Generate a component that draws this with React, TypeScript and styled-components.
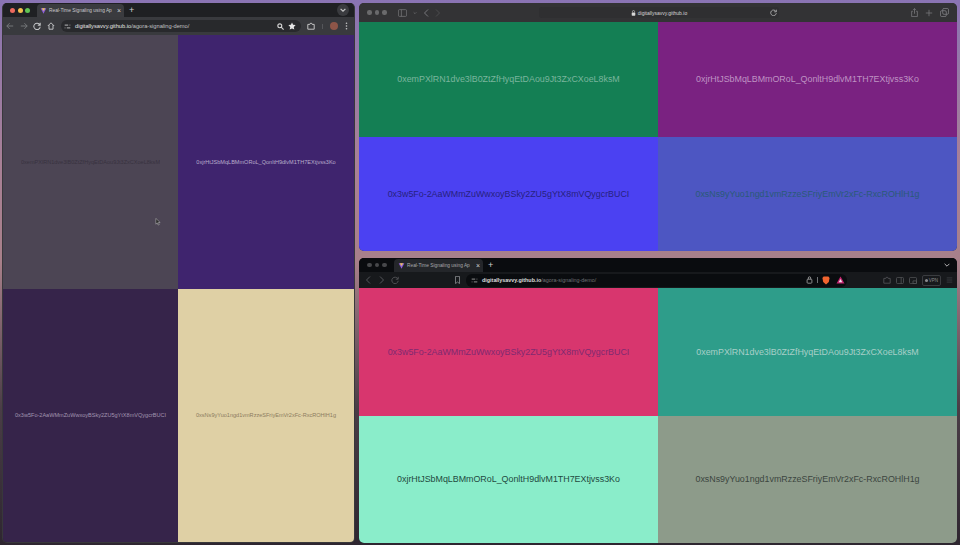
import React from 'react'
import styled, { createGlobalStyle } from 'styled-components'

const ADDR_A = '0xemPXlRN1dve3lB0ZtZfHyqEtDAou9Jt3ZxCXoeL8ksM'
const ADDR_B = '0xjrHtJSbMqLBMmORoL_QonltH9dlvM1TH7EXtjvss3Ko'
const ADDR_C = '0x3w5Fo-2AaWMmZuWwxoyBSky2ZU5gYtX8mVQygcrBUCI'
const ADDR_D = '0xsNs9yYuo1ngd1vmRzzeSFriyEmVr2xFc-RxcROHlH1g'

const Favicon = () => (
  <FaviconMark width="7" height="8" viewBox="0 0 10 10">
    <path d="M1 1h8L5 9z" fill="#8d5fd8" />
    <path d="M2.500 1h5L5 5z" fill="#eec25a" />
  </FaviconMark>
)

const ChromeBar = () => (
  <>
    <TabStrip>
      <Lights>
        <Light color="#ed6a5e" />
        <Light color="#f4bf4f" />
        <Light color="#61c554" />
      </Lights>
      <Tab>
        <Favicon />
        <TabTitle>Real-Time Signaling using Ap</TabTitle>
        <TabClose>×</TabClose>
      </Tab>
      <NewTab>+</NewTab>
      <Spacer />
      <RoundBtn>
        <svg width="6" height="6" viewBox="0 0 10 10" fill="none" stroke="#c8c8c8" strokeWidth="2">
          <path d="M1 3l4 4 4-4" />
        </svg>
      </RoundBtn>
    </TabStrip>
    <ChromeTools>
      <svg width="8" height="8" viewBox="0 0 10 10" fill="none" stroke="#77797c" strokeWidth="1.200">
        <path d="M9 5H1M4.500 1.500L1 5l3.500 3.500" />
      </svg>
      <svg width="8" height="8" viewBox="0 0 10 10" fill="none" stroke="#77797c" strokeWidth="1.200">
        <path d="M1 5h8M5.500 1.500L9 5 5.500 8.500" />
      </svg>
      <svg width="8" height="8" viewBox="0 0 10 10" fill="none" stroke="#c4c6c8" strokeWidth="1.300">
        <path d="M8.500 3.500A4 4 0 1 0 9 6M9 1v3H6" />
      </svg>
      <svg width="8" height="8" viewBox="0 0 10 10" fill="none" stroke="#c4c6c8" strokeWidth="1.200">
        <path d="M1 5l4-4 4 4M2.500 4v5h5V4" />
      </svg>
      <ChromeAddress>
        <svg width="7" height="7" viewBox="0 0 10 10" fill="none" stroke="#d4d4d4" strokeWidth="1.200">
          <path d="M1 3h5M8 3h1M1 7h1M4 7h5" />
        </svg>
        <AddressText>
          digitallysavvy.github.io<Dim>/agora-signaling-demo/</Dim>
        </AddressText>
        <Spacer />
        <svg width="7" height="7" viewBox="0 0 10 10" fill="none" stroke="#d4d4d4" strokeWidth="1.600">
          <circle cx="4" cy="4" r="2.800" />
          <path d="M6 6l3.400 3.400" />
        </svg>
        <svg width="8" height="8" viewBox="0 0 10 10" fill="#e4e4e4">
          <path d="M5 .5l1.400 3 3.200.4-2.400 2.200.7 3.200L5 8.200 2.100 9.300l.7-3.200L.4 3.900l3.200-.4z" />
        </svg>
      </ChromeAddress>
      <ChromeActions>
        <svg width="8" height="8" viewBox="0 0 10 10" fill="none" stroke="#c8c8c8" strokeWidth="1.200">
          <path d="M1 3h2.500a1.500 1.500 0 0 1 3 0H9v6H1z" />
        </svg>
        <ToolSeparator />
        <Avatar />
        <svg width="3" height="8" viewBox="0 0 3 10" fill="#c8c8c8">
          <circle cx="1.500" cy="1.500" r="1" />
          <circle cx="1.500" cy="5" r="1" />
          <circle cx="1.500" cy="8.500" r="1" />
        </svg>
      </ChromeActions>
    </ChromeTools>
  </>
)

const SafariBar = () => (
  <SafariTools>
    <Lights>
      <SafariLight color="#6a6a6c" />
      <SafariLight color="#6a6a6c" />
      <SafariLight color="#6a6a6c" />
    </Lights>
    <SafariNav>
      <svg width="9" height="8" viewBox="0 0 12 10" fill="none" stroke="#77777a" strokeWidth="1">
        <rect x=".5" y=".5" width="11" height="9" rx="1.500" />
        <path d="M4.500 .5v9" />
      </svg>
      <svg width="4" height="4" viewBox="0 0 6 6" fill="none" stroke="#77777a" strokeWidth="1">
        <path d="M1 2l2 2 2-2" />
      </svg>
      <svg width="6" height="8" viewBox="0 0 6 8" fill="none" stroke="#77777a" strokeWidth="1">
        <path d="M5 .5L1.500 4 5 7.500" />
      </svg>
      <svg width="6" height="8" viewBox="0 0 6 8" fill="none" stroke="#4c4c4e" strokeWidth="1">
        <path d="M1 .5L4.500 4 1 7.500" />
      </svg>
    </SafariNav>
    <SafariAddress>
      <svg width="5" height="6" viewBox="0 0 8 10" fill="#d8d8d8">
        <rect x="1" y="4" width="6" height="5.500" rx="1" />
        <path d="M2.200 4V2.600a1.800 1.800 0 0 1 3.600 0V4" fill="none" stroke="#d8d8d8" />
      </svg>
      <SafariHost>digitallysavvy.github.io</SafariHost>
      <SafariReload>
        <svg width="7" height="7" viewBox="0 0 10 10" fill="none" stroke="#b4b4b4" strokeWidth="1.200">
          <path d="M8.500 3.500A4 4 0 1 0 9 6M9 1v3H6" />
        </svg>
      </SafariReload>
    </SafariAddress>
    <SafariActions>
      <svg width="7" height="9" viewBox="0 0 8 11" fill="none" stroke="#77777a" strokeWidth="1">
        <path d="M2 4H.5v6.500h7V4H6M4 7V.8M2.400 2.200L4 .7l1.600 1.500" />
      </svg>
      <svg width="8" height="8" viewBox="0 0 10 10" fill="none" stroke="#77777a" strokeWidth="1">
        <path d="M5 1v8M1 5h8" />
      </svg>
      <svg width="9" height="9" viewBox="0 0 10 10" fill="none" stroke="#77777a" strokeWidth="1">
        <rect x="3" y=".5" width="6.500" height="6.500" rx="1.500" />
        <rect x=".5" y="3" width="6.500" height="6.500" rx="1.500" />
      </svg>
    </SafariActions>
  </SafariTools>
)

const BraveBar = () => (
  <>
    <BraveStrip>
      <Lights>
        <SafariLight color="#47484b" />
        <SafariLight color="#47484b" />
        <SafariLight color="#47484b" />
      </Lights>
      <BraveTab>
        <Favicon />
        <BraveTabTitle>Real-Time Signaling using Ap</BraveTabTitle>
        <TabClose>×</TabClose>
      </BraveTab>
      <NewTab>+</NewTab>
      <Spacer />
      <svg width="6" height="6" viewBox="0 0 10 10" fill="none" stroke="#b8b8b8" strokeWidth="1.600">
        <path d="M1 3l4 4 4-4" />
      </svg>
    </BraveStrip>
    <BraveTools>
      <BraveNav>
        <svg width="7" height="8" viewBox="0 0 7 8" fill="none" stroke="#55575a" strokeWidth="1">
          <path d="M5 .5L1.500 4 5 7.500" />
        </svg>
        <svg width="7" height="8" viewBox="0 0 7 8" fill="none" stroke="#55575a" strokeWidth="1">
          <path d="M2 .5L5.500 4 2 7.500" />
        </svg>
        <svg width="8" height="8" viewBox="0 0 10 10" fill="none" stroke="#55575a" strokeWidth="1.100">
          <path d="M8.500 3.500A4 4 0 1 0 9 6M9 1v3H6" />
        </svg>
      </BraveNav>
      <BookmarkSlot>
        <svg width="7" height="8" viewBox="0 0 8 10" fill="none" stroke="#8a8c8f" strokeWidth="1">
          <path d="M1.500 .5h5v9l-2.500-2-2.500 2z" />
        </svg>
      </BookmarkSlot>
      <BraveAddress>
        <svg width="7" height="7" viewBox="0 0 10 10" fill="none" stroke="#a8a8a8" strokeWidth="1.200">
          <path d="M1 3h5M8 3h1M1 7h1M4 7h5" />
        </svg>
        <BraveAddressText>
          digitallysavvy.github.io<BraveDim>/agora-signaling-demo/</BraveDim>
        </BraveAddressText>
        <Spacer />
        <svg width="7" height="8" viewBox="0 0 8 10" fill="none" stroke="#a8a8a8" strokeWidth="1">
          <rect x="1" y="4" width="6" height="5" rx="1" />
          <path d="M2.500 4V2.500a1.500 1.500 0 0 1 3 0V4" />
        </svg>
        <AddressDivider />
        <svg width="8" height="9" viewBox="0 0 10 11" fill="#f0642f">
          <path d="M2 .5h6l1.500 2-1 5L5 10.500 1.500 7.500l-1-5z" />
        </svg>
        <BraveRewards>
          <svg width="9" height="8" viewBox="0 0 10 9">
            <path d="M5 .5l4.500 8h-9z" fill="#c3246e" />
            <path d="M5 3.500l2 3.500H3z" fill="#efe4f0" />
          </svg>
        </BraveRewards>
      </BraveAddress>
      <BraveActions>
        <svg width="8" height="8" viewBox="0 0 10 10" fill="none" stroke="#55575a" strokeWidth="1">
          <path d="M1 3h2.500a1.500 1.500 0 0 1 3 0H9v6H1z" />
        </svg>
        <svg width="8" height="7" viewBox="0 0 10 9" fill="none" stroke="#55575a" strokeWidth="1">
          <rect x=".5" y=".5" width="9" height="8" rx="1.500" />
          <path d="M6.500 .5v8" />
        </svg>
        <svg width="8" height="7" viewBox="0 0 10 9" fill="none" stroke="#55575a" strokeWidth="1">
          <rect x=".5" y=".5" width="9" height="8" rx="1.500" />
          <path d="M5 5h4.500v3.500H5z" />
        </svg>
        <VpnBadge>
          <VpnDot />
          VPN
        </VpnBadge>
        <svg width="7" height="6" viewBox="0 0 10 8" fill="none" stroke="#44464a" strokeWidth="1">
          <path d="M1 1h8M1 4h8M1 7h8" />
        </svg>
      </BraveActions>
    </BraveTools>
  </>
)

const App = () => (
  <>
    <GlobalStyle />
    <Desktop>
      <LeftWindow>
        <ChromeBar />
        <LeftGrid>
          <Cell bg="#4c4554" color="#38323f" size={5.55}>
            <Truncated>{ADDR_A}</Truncated>
          </Cell>
          <Cell bg="#3f246e" color="#b8accb" size={5.55}>{ADDR_B}</Cell>
          <Cell bg="#36244a" color="#a194b0" size={5.55}>{ADDR_C}</Cell>
          <Cell bg="#dfd0a5" color="#8c7c5f" size={5.55}>{ADDR_D}</Cell>
        </LeftGrid>
        <Cursor>
          <svg width="6" height="8" viewBox="0 0 8 11">
            <path d="M1 .5v8l2-1.800 1.300 3 1.400-.6-1.300-2.900h2.600z" fill="#2a2a2a" stroke="#d8d8d8" strokeWidth=".6" />
          </svg>
        </Cursor>
      </LeftWindow>
      <RightColumn>
        <TopWindow>
          <SafariBar />
          <UserGrid>
            <Cell bg="#147f54" color="#7ab59d" size={8.9}>{ADDR_A}</Cell>
            <Cell bg="#7a2281" color="#bf93c3" size={8.9}>{ADDR_B}</Cell>
            <Cell bg="#4b41f2" color="#27217f" size={8.9}>{ADDR_C}</Cell>
            <Cell bg="#4d56c2" color="#2a5a78" size={8.9}>{ADDR_D}</Cell>
          </UserGrid>
        </TopWindow>
        <BottomWindow>
          <BraveBar />
          <UserGrid>
            <Cell bg="#d8366e" color="#7f2a70" size={8.9}>{ADDR_C}</Cell>
            <Cell bg="#2e9d8a" color="#a8cfc8" size={8.9}>{ADDR_A}</Cell>
            <Cell bg="#8aedca" color="#1f4a40" size={8.9}>{ADDR_B}</Cell>
            <Cell bg="#8d9b8a" color="#3c4640" size={8.9}>{ADDR_D}</Cell>
          </UserGrid>
        </BottomWindow>
      </RightColumn>
    </Desktop>
  </>
)

export default App

const GlobalStyle = createGlobalStyle`
  html, body {
    margin: 0;
    padding: 0;
    width: 960px;
    height: 545px;
    overflow: hidden;
  }
  body {
    font-family: 'Liberation Sans', Arial, sans-serif;
  }
`
const Desktop = styled.div`
  width: 960px;
  height: 545px;
  box-sizing: border-box;
  display: flex;
  gap: 4px;
  padding: 3px 3px 2px 2px;
  background: linear-gradient(180deg, #8a74b4 0%, #a88096 30%, #a8808a 48%, #4a3d46 75%, #2e2630 100%);
`
const LeftWindow = styled.div`
  position: relative;
  width: 353px;
  box-sizing: border-box;
  display: flex;
  flex-direction: column;
  border: 1px solid #38383b;
  border-top: 0;
  border-radius: 5px;
  overflow: hidden;
  background: #2b2c2f;
`
const RightColumn = styled.div`
  flex: 1;
  display: flex;
  flex-direction: column;
  gap: 7px;
`
const TopWindow = styled.div`
  height: 248px;
  display: flex;
  flex-direction: column;
  border-radius: 5px;
  overflow: hidden;
  background: #333335;
`
const BottomWindow = styled.div`
  flex: 1;
  display: flex;
  flex-direction: column;
  border-radius: 5px;
  overflow: hidden;
  background: #0b0d10;
`
const UserGrid = styled.div`
  flex: 1;
  display: grid;
  grid-template-columns: 1fr 1fr;
  grid-template-rows: 1fr 1fr;
`
const LeftGrid = styled(UserGrid)`
  grid-template-columns: 175px 176px;
`
const Cell = styled.div<{ bg: string; color: string; size: number }>`
  display: flex;
  align-items: center;
  justify-content: center;
  min-width: 0;
  overflow: hidden;
  white-space: nowrap;
  background: ${(p) => p.bg};
  color: ${(p) => p.color};
  font-size: ${(p) => p.size}px;
`
const Truncated = styled.span`
  max-width: 146px;
  overflow: hidden;
  text-overflow: ellipsis;
`
const Cursor = styled.div`
  position: absolute;
  left: 152px;
  top: 215px;
  line-height: 0;
`
const FaviconMark = styled.svg`
  flex-shrink: 0;
`
const Lights = styled.div`
  display: flex;
  gap: 2.500px;
  align-items: center;
`
const Light = styled.span<{ color: string }>`
  width: 5px;
  height: 5px;
  border-radius: 50%;
  background: ${(p) => p.color};
`
const SafariLight = styled(Light)`
  width: 4.500px;
  height: 4.500px;
  margin-right: .5px;
`
const Spacer = styled.div`
  flex: 1;
`
const TabStrip = styled.div`
  height: 14px;
  display: flex;
  align-items: flex-end;
  padding: 0 5px 0 7px;
  background: #1f2023;
  & > ${Lights} {
    align-self: center;
    margin-right: 7px;
  }
`
const Tab = styled.div`
  width: 87px;
  height: 13px;
  display: flex;
  align-items: center;
  gap: 2px;
  box-sizing: border-box;
  padding: 0 3px 0 3px;
  border-radius: 4px 4px 0 0;
  background: #3a3b3f;
`
const TabTitle = styled.span`
  flex: 1;
  white-space: nowrap;
  font-size: 4.800px;
  color: #c9cacc;
`
const TabClose = styled.span`
  font-size: 7px;
  line-height: 1;
  color: #d0d0d0;
`
const NewTab = styled.span`
  align-self: center;
  margin-left: 5px;
  font-size: 9px;
  line-height: 1;
  color: #d0d0d0;
`
const RoundBtn = styled.span`
  align-self: center;
  width: 12px;
  height: 12px;
  display: flex;
  align-items: center;
  justify-content: center;
  border-radius: 50%;
  background: #3a3b3f;
`
const ChromeTools = styled.div`
  height: 18px;
  display: flex;
  align-items: center;
  gap: 5.500px;
  padding: 0 6px 0 3px;
  background: #393a3e;
`
const ChromeAddress = styled.div`
  width: 240px;
  height: 12px;
  display: flex;
  align-items: center;
  gap: 4px;
  box-sizing: border-box;
  margin-left: 1px;
  padding: 0 5px 0 3px;
  border-radius: 6px;
  background: #28292c;
`
const AddressText = styled.span`
  font-size: 5.700px;
  color: #e4e4e4;
  white-space: nowrap;
`
const Dim = styled.span`
  color: #c0c1c3;
`
const ChromeActions = styled.div`
  flex: 1;
  display: flex;
  align-items: center;
  justify-content: space-between;
`
const ToolSeparator = styled.span`
  width: 1px;
  height: 5px;
  background: #55565a;
`
const Avatar = styled.span`
  width: 8px;
  height: 8px;
  border-radius: 50%;
  background: #8e5548;
`
const SafariTools = styled.div`
  height: 19px;
  display: flex;
  align-items: center;
  padding: 0 8px;
  background: #333335;
`
const SafariNav = styled.div`
  display: flex;
  align-items: center;
  gap: 6px;
  margin-left: 11px;
`
const SafariAddress = styled.div`
  width: 240px;
  height: 11px;
  display: flex;
  align-items: center;
  justify-content: center;
  gap: 2px;
  position: relative;
  margin-left: 98px;
  border-radius: 3px;
  background: #2f2f31;
`
const SafariHost = styled.span`
  font-size: 5px;
  color: #d6d6d6;
`
const SafariReload = styled.span`
  position: absolute;
  right: 2px;
  top: 2px;
  line-height: 0;
`
const SafariActions = styled.div`
  flex: 1;
  display: flex;
  align-items: center;
  justify-content: flex-end;
  gap: 7px;
`
const BraveStrip = styled.div`
  height: 14px;
  display: flex;
  align-items: center;
  padding: 0 7px 0 8px;
  background: #0a0c0f;
  & > ${Lights} {
    margin-right: 7px;
  }
`
const BraveTab = styled(Tab)`
  align-self: flex-end;
  width: 89px;
  padding: 0 3px 0 4px;
  background: #24262a;
`
const BraveTabTitle = styled(TabTitle)`
  color: #a8a9ab;
`
const BraveTools = styled.div`
  height: 16px;
  display: flex;
  align-items: center;
  padding: 0 4px 0 6px;
  background: #17191c;
`
const BraveNav = styled.div`
  display: flex;
  align-items: center;
  gap: 6px;
`
const BookmarkSlot = styled.div`
  width: 67px;
  display: flex;
  justify-content: flex-end;
  padding-right: 5px;
  box-sizing: border-box;
  line-height: 0;
`
const BraveAddress = styled.div`
  width: 381px;
  height: 13px;
  display: flex;
  align-items: center;
  gap: 4px;
  box-sizing: border-box;
  padding: 0 2px 0 5px;
  border-radius: 6px;
  background: #0a0c0f;
`
const BraveAddressText = styled.span`
  font-size: 5.400px;
  font-weight: 700;
  color: #dcdcdc;
  white-space: nowrap;
`
const BraveDim = styled.span`
  font-weight: 400;
  color: #6e7074;
`
const AddressDivider = styled.span`
  width: 1px;
  height: 6px;
  background: #6e7074;
`
const BraveRewards = styled.span`
  margin-left: 2px;
  line-height: 0;
`
const BraveActions = styled.div`
  flex: 1;
  display: flex;
  align-items: center;
  justify-content: flex-end;
  gap: 5px;
`
const VpnBadge = styled.span`
  display: flex;
  align-items: center;
  gap: 1px;
  height: 9px;
  padding: 0 2px;
  border: 1px solid #3a3c40;
  border-radius: 2px;
  font-size: 4.500px;
  color: #8a8c8f;
`
const VpnDot = styled.span`
  width: 3px;
  height: 3px;
  border-radius: 50%;
  background: #8a8c8f;
`
